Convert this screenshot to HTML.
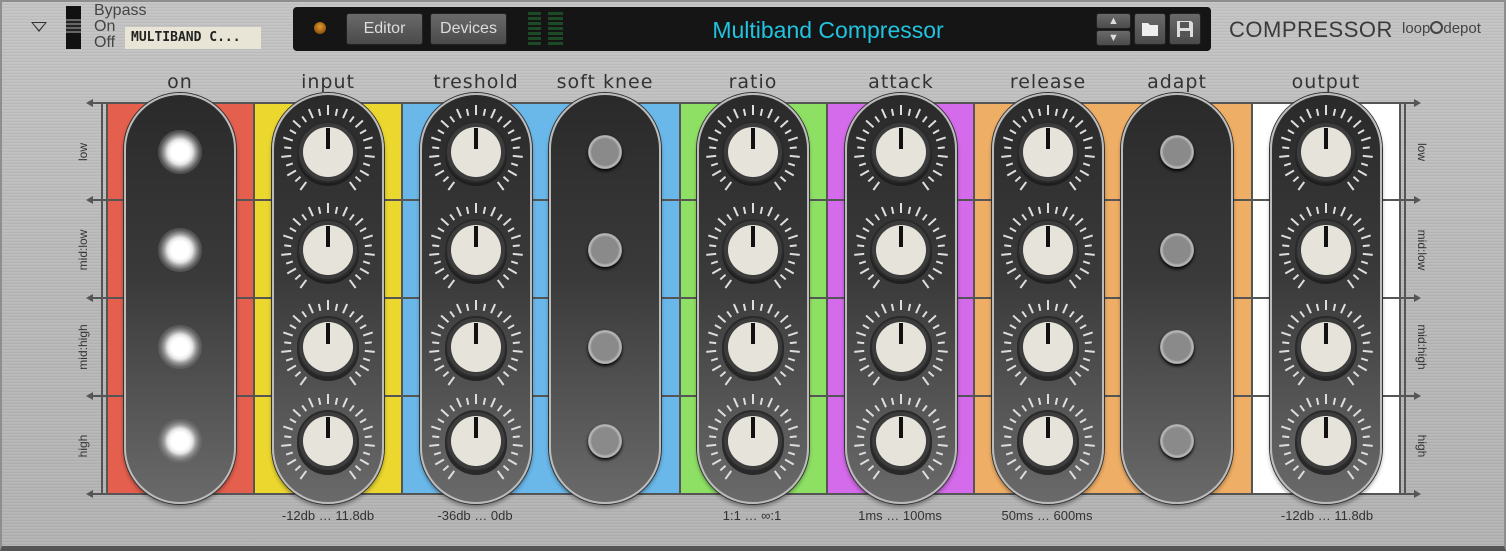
<!DOCTYPE html>
<html><head><meta charset="utf-8"><style>
*{margin:0;padding:0;box-sizing:border-box}
body{width:1506px;height:551px;overflow:hidden;font-family:"Liberation Sans",sans-serif;position:relative;
background:linear-gradient(180deg,#c4c4c4 0%,#b9b9b9 50%,#b3b3b3 100%);}
#bg{position:absolute;inset:0;background:repeating-linear-gradient(0deg,rgba(255,255,255,.06) 0 1px,rgba(0,0,0,.04) 1px 2px,transparent 2px 3px);border:2px solid #8e8e8e;border-bottom:5px solid #555}
.abs{position:absolute}
.band{position:absolute;top:103px;height:391px}
.hl{position:absolute;left:88px;width:1330px;height:2px;background:#555}
.pill{position:absolute;top:93px;width:112px;height:411px;border-radius:56px;background:linear-gradient(180deg,#2a2a2a 0%,#3a3a3a 45%,#6a6a6a 100%);border:2px solid #bbb;box-shadow:0 0 0 1px #333,0 3px 4px rgba(0,0,0,.4)}
.lbl{position:absolute;font-size:19px;color:#333;letter-spacing:1px;font-family:"DejaVu Sans",sans-serif}
.side{position:absolute;font-size:12px;color:#333;white-space:nowrap}
.rng{position:absolute;top:508px;font-size:13px;color:#333;white-space:nowrap;transform:translateX(-50%)}
.btn{position:absolute;top:13px;height:32px;background:linear-gradient(#6a6a6a,#4a4a4a);border:1px solid #222;border-radius:3px;color:#ddd;font-size:16px;text-align:center;line-height:30px}
</style></head><body>
<div id="bg"></div>
<div class="abs" style="left:31px;top:22px;width:0;height:0;border-left:8px solid transparent;border-right:8px solid transparent;border-top:10px solid #333"></div>
<div class="abs" style="left:33px;top:23px;width:0;height:0;border-left:6px solid transparent;border-right:6px solid transparent;border-top:7px solid #c0c0c0"></div>
<div class="abs" style="left:66px;top:6px;width:15px;height:43px;background:#111"></div>
<div class="abs" style="left:66px;top:19px;width:15px;height:14px;background:repeating-linear-gradient(#666 0 2px,#222 2px 4px)"></div>
<div class="abs" style="left:94px;top:3px;font-size:16px;color:#444;line-height:16px">Bypass<br>On<br>Off</div>
<div class="abs" style="left:125px;top:27px;width:136px;height:22px;background:#e8e4d6;font-family:'DejaVu Sans Mono',monospace;font-size:13px;font-weight:bold;color:#222;padding:3px 0 0 6px;white-space:nowrap;overflow:hidden">MULTIBAND C...</div>
<div class="abs" style="left:293px;top:7px;width:918px;height:44px;background:#151515;border-radius:4px"></div>
<div class="abs" style="left:314px;top:22px;width:12px;height:12px;border-radius:50%;background:radial-gradient(circle at 50% 40%,#e89a30,#6a3800)"></div>
<div class="btn" style="left:346px;width:77px">Editor</div>
<div class="btn" style="left:430px;width:77px">Devices</div>
<div class="abs" style="left:528px;top:12px;width:35px;height:33px;background:repeating-linear-gradient(#1c4a26 0 3px,#151515 3px 5px);-webkit-mask:linear-gradient(90deg,#000 0 13px,transparent 13px 20px,#000 20px 33px)"></div>
<div class="abs" style="left:600px;top:17px;width:456px;text-align:center;font-size:23px;color:#22c3de">Multiband Compressor</div>
<div class="btn" style="left:1096px;top:13px;width:35px;height:16px;line-height:14px;font-size:11px">▲</div>
<div class="btn" style="left:1096px;top:30px;width:35px;height:16px;line-height:14px;font-size:11px">▼</div>
<div class="btn" style="left:1134px;width:32px"><svg width="20" height="16" style="margin-top:7px"><path d="M2 2h6l2 2h8v11H2z" fill="#eee"/></svg></div>
<div class="btn" style="left:1169px;width:32px"><svg width="20" height="20" style="margin-top:5px"><path d="M2 2h14l2 2v14H2z" fill="#ddd"/><rect x="5" y="3" width="9" height="6" fill="#555"/><rect x="5" y="12" width="10" height="6" fill="#555"/></svg></div>
<div class="abs" style="left:1229px;top:17px;font-size:22px;color:#3a3a3a;letter-spacing:.5px">COMPRESSOR</div>
<div class="abs" style="left:1402px;top:20px;font-size:15px;color:#444">loop<span style="display:inline-block;width:13px;height:13px;border:2.5px solid #444;border-radius:50%;vertical-align:-1px"></span>depot</div>

<div id="main"></div>
<script>
const m=document.getElementById('main');let h='';
const bands=[[106,253,'#e45f4e'],[253,401,'#ecd72f'],[401,679,'#6ab8ea'],[679,826,'#8ee064'],[826,973,'#d46bea'],[973,1251,'#efae66'],[1251,1399,'#ffffff']];
bands.forEach(b=>h+=`<div class="band" style="left:${b[0]}px;width:${b[1]-b[0]}px;background:${b[2]}"></div>`);
bands.forEach(b=>h+=`<div class="abs" style="left:${b[0]}px;top:103px;width:2px;height:391px;background:#555"></div>`);
h+=`<div class="abs" style="left:101px;top:103px;width:2px;height:391px;background:#555"></div>`;
h+=`<div class="abs" style="left:1399px;top:103px;width:2px;height:391px;background:#555"></div><div class="abs" style="left:1404px;top:103px;width:2px;height:391px;background:#555"></div>`;
const ys=[103,200,298,396,494];
ys.forEach(y=>{h+=`<div class="hl" style="top:${y-1}px"></div>`;
 h+=`<div class="abs" style="left:86px;top:${y-4}px;border-right:7px solid #555;border-top:4px solid transparent;border-bottom:4px solid transparent"></div>`;
 h+=`<div class="abs" style="left:1414px;top:${y-4}px;border-left:7px solid #555;border-top:4px solid transparent;border-bottom:4px solid transparent"></div>`;});
const cols=[[124,'on','btn'],[272,'input','k'],[420,'treshold','k'],[549,'soft knee','g'],[697,'ratio','k'],[845,'attack','k'],[992,'release','k'],[1121,'adapt','g'],[1270,'output','k']];
const ky=[152,250,347,441];
function knob(){let t='';for(let i=0;i<25;i++){const a=(-144+i*12)*Math.PI/180;const r1=37,r2=i%2?44:47;
 t+=`<line x1="${50+r1*Math.sin(a)}" y1="${50-r1*Math.cos(a)}" x2="${50+r2*Math.sin(a)}" y2="${50-r2*Math.cos(a)}" stroke="#ddd" stroke-width="2"/>`}
 return `<svg width="100" height="100" viewBox="0 0 100 100">${t}<circle cx="50" cy="53" r="31" fill="#1a1a1a" opacity=".8"/><circle cx="50" cy="50" r="30" fill="#3c3c3c" stroke="#2a2a2a" stroke-width="2"/><circle cx="50" cy="50" r="25" fill="#e6e4da"/><rect x="48" y="26" width="4" height="21" fill="#111"/></svg>`}
cols.forEach(c=>{const cx=c[0]+56;
 h+=`<div class="pill" style="left:${c[0]}px"></div>`;
 h+=`<div class="lbl" style="left:${cx-60}px;width:120px;text-align:center;top:71px">${c[1]}</div>`;
 ky.forEach(y=>{
  if(c[2]=='k')h+=`<div class="abs" style="left:${cx-50}px;top:${y-50}px">${knob()}</div>`;
  else if(c[2]=='btn')h+=`<div class="abs" style="left:${cx-22}px;top:${y-22}px;width:44px;height:44px;border-radius:50%;background:radial-gradient(circle,#fff 0 28%,#e6e6e6 40%,#999 52%,rgba(120,120,120,.5) 65%,rgba(80,80,80,0) 100%)"></div>`;
  else h+=`<div class="abs" style="left:${cx-17}px;top:${y-17}px;width:34px;height:34px;border-radius:50%;background:radial-gradient(circle,#8a8a8a 0 55%,#bbb 65%,#333 85%);box-shadow:0 2px 3px #000"></div>`;});
});
const sl=['low','mid:low','mid:high','high'],sc=[152,250,347,446];
sl.forEach((s,i)=>{h+=`<div class="side" style="left:${83-40}px;width:80px;text-align:center;top:${sc[i]-7}px;transform:rotate(-90deg)">${s}</div>`;
 h+=`<div class="side" style="left:${1422-40}px;width:80px;text-align:center;top:${sc[i]-7}px;transform:rotate(90deg)">${s}</div>`;});
[[328,'-12db … 11.8db'],[475,'-36db … 0db'],[752,'1:1 … ∞:1'],[900,'1ms … 100ms'],[1047,'50ms … 600ms'],[1327,'-12db … 11.8db']].forEach(r=>h+=`<div class="rng" style="left:${r[0]}px">${r[1]}</div>`);
m.innerHTML=h;
</script>
</body></html>
